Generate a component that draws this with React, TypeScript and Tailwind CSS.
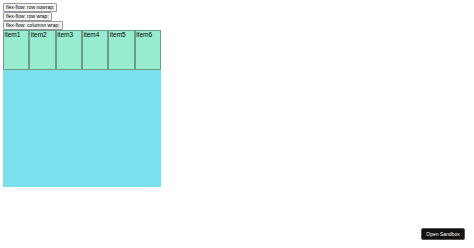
import React from 'react';

const items = ['item1', 'item2', 'item3', 'item4', 'item5', 'item6'];
const modes = ['flex-flow: row nowrap;', 'flex-flow: row wrap;', 'flex-flow: columnn wrap;'];

export default function App() {
  return (
    <div className="relative w-[474px] h-[248px] bg-white font-['Liberation_Sans',Arial,sans-serif] overflow-hidden">
      <div className="pl-[3px] pt-[3px] flex flex-col items-start">
        {modes.map((m) => (
          <button
            key={m}
            className="h-[8.5px] mb-[0.5px] px-[2px] text-[5px] leading-none text-black bg-[#f4f4f4] border-[0.5px] border-[#9a9a9a] rounded-[1px]"
          >
            {m}
          </button>
        ))}
        <div className="w-[158px] h-[157px] bg-[#7ae0ee] flex flex-row flex-nowrap items-start">
          {items.map((it) => (
            <div
              key={it}
              className="flex-1 h-[40px] bg-[#98ecce] border-[0.5px] border-[#6e9a8a] text-[6.5px] leading-[1.15] text-black pl-[0.5px]"
            >
              {it}
            </div>
          ))}
        </div>
      </div>
      <button className="absolute left-[421px] top-[228px] w-[44px] h-[12px] bg-[#111] text-white text-[5px] rounded-[2px] border-[0.5px] border-[#555] leading-none">
        Open Sandbox
      </button>
    </div>
  );
}
